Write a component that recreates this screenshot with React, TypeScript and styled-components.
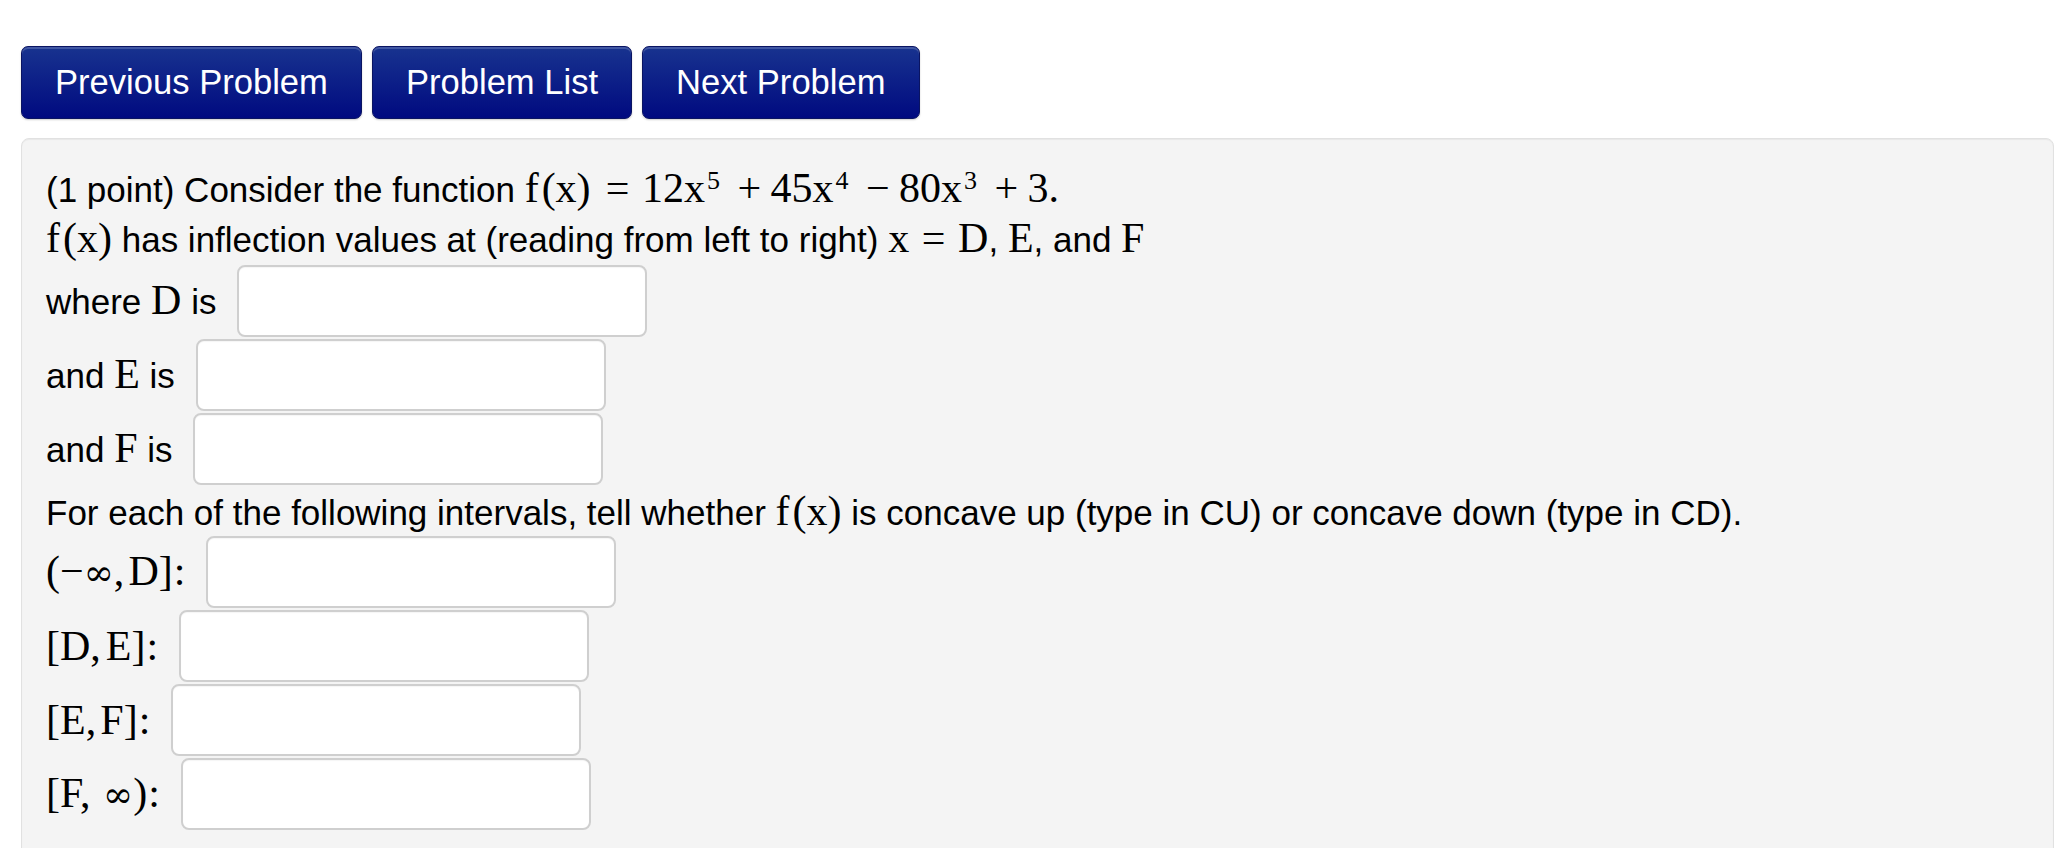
import styled, { createGlobalStyle } from "styled-components";

const GlobalStyle = createGlobalStyle`
  body {
    margin: 0;
    background: #ffffff;
    color: #000000;
    font-family: "Liberation Sans", Arial, sans-serif;
  }
`;

const Page = styled.div`
  padding: 46px 16px 0 21px;
`;

const Nav = styled.nav`
  display: flex;
  gap: 10px;
`;

const NavButton = styled.button`
  height: 73px;
  padding: 0 33px;
  font-family: "Liberation Sans", Arial, sans-serif;
  font-size: 34.6px;
  color: #ffffff;
  background: linear-gradient(#18338f, #000a80);
  border: 1px solid #0a1462;
  border-radius: 7px;
  box-shadow: inset 0 2px 0 rgba(255, 255, 255, 0.18), 0 1px 2px rgba(0, 0, 0, 0.2);
  cursor: pointer;
`;

const Well = styled.div`
  margin-top: 19px;
  padding: 27px 24px 40px;
  background: #f4f4f4;
  border: 1px solid #e1e1e1;
  border-radius: 8px;
  box-shadow: inset 0 1px 1px rgba(0, 0, 0, 0.05);
  font-size: 35px;
  line-height: 44px;
`;

const TextLine = styled.div<{ $top?: number }>`
  margin-top: ${(p) => p.$top ?? 0}px;
  white-space: nowrap;
`;

const AnswerRow = styled.div<{ $top?: number }>`
  display: flex;
  align-items: center;
  gap: 21px;
  height: 72px;
  margin-top: ${(p) => p.$top ?? 0}px;
  margin-bottom: 2px;
  white-space: pre;
`;

const AnswerInput = styled.input`
  box-sizing: border-box;
  width: 410px;
  height: 72px;
  margin: 0;
  background: #ffffff;
  border: 2px solid #cfcfcf;
  border-radius: 8px;
  box-shadow: inset 0 1px 1px rgba(0, 0, 0, 0.04);
  font-size: 30px;
`;

const M = styled.span`
  font-family: "Liberation Serif", "Times New Roman", serif;
  font-size: 42px;
`;

/* raised with a relative offset so the line box keeps its height */
const Sup = styled.span`
  position: relative;
  top: -0.5em;
  font-size: 0.62em;
  margin-left: 2px;
  margin-right: 0.32em;
`;

const Op = styled.span<{ $l: number; $r: number }>`
  margin: 0 ${(p) => p.$r}em 0 ${(p) => p.$l}em;
`;

const Inf = styled.span`
  font-family: "DejaVu Serif", serif;
  font-size: 0.86em;
`;

const Thin = styled.span<{ $w?: number }>`
  margin-left: ${(p) => p.$w ?? 0.1}em;
`;

const Colon = styled.span`
  margin-left: 1px;
`;

const Fx = () => (
  <M>
    f<span style={{ marginLeft: 3 }}>(x)</span>
  </M>
);

export default function App() {
  return (
    <Page>
      <GlobalStyle />
      <Nav>
        <NavButton>Previous Problem</NavButton>
        <NavButton>Problem List</NavButton>
        <NavButton>Next Problem</NavButton>
      </Nav>
      <Well>
        <TextLine>
          (1 point) Consider the function{" "}
          <M>
            f<span style={{ marginLeft: 3 }}>(x)</span>
            <Op $l={0.36} $r={0.3}>=</Op>12x<Sup>5</Sup>
            <Op $l={0.22} $r={0.22}>+</Op>45x<Sup>4</Sup>
            <Op $l={0.22} $r={0.22}>−</Op>80x<Sup>3</Sup>
            <Op $l={0.22} $r={0.22}>+</Op>3.
          </M>
        </TextLine>
        <TextLine>
          <Fx /> has inflection values at (reading from left to right){" "}
          <M>
            x<Op $l={0.3} $r={0.3}>=</Op>D
          </M>
          , <M>E</M>, and <M>F</M>
        </TextLine>

        <AnswerRow $top={3}>
          <span>
            where <M>D</M> is
          </span>
          <AnswerInput />
        </AnswerRow>
        <AnswerRow>
          <span>
            and <M>E</M> is
          </span>
          <AnswerInput />
        </AnswerRow>
        <AnswerRow>
          <span>
            and <M>F</M> is
          </span>
          <AnswerInput />
        </AnswerRow>

        <TextLine $top={4}>
          For each of the following intervals, tell whether <Fx /> is concave
          up (type in CU) or concave down (type in CD).
        </TextLine>

        <AnswerRow $top={1}>
          <M>
            (−<Inf>∞</Inf>,<Thin>D</Thin>]<Colon>:</Colon>
          </M>
          <AnswerInput />
        </AnswerRow>
        <AnswerRow>
          <M>
            [D,<Thin $w={0.12}>E</Thin>]<Colon>:</Colon>
          </M>
          <AnswerInput />
        </AnswerRow>
        <AnswerRow>
          <M>
            [E,<Thin>F</Thin>]<Colon>:</Colon>
          </M>
          <AnswerInput />
        </AnswerRow>
        <AnswerRow>
          <M>
            [F,<Thin $w={0.3}>
              <Inf>∞</Inf>
            </Thin>
            )<Colon>:</Colon>
          </M>
          <AnswerInput />
        </AnswerRow>
      </Well>
    </Page>
  );
}
